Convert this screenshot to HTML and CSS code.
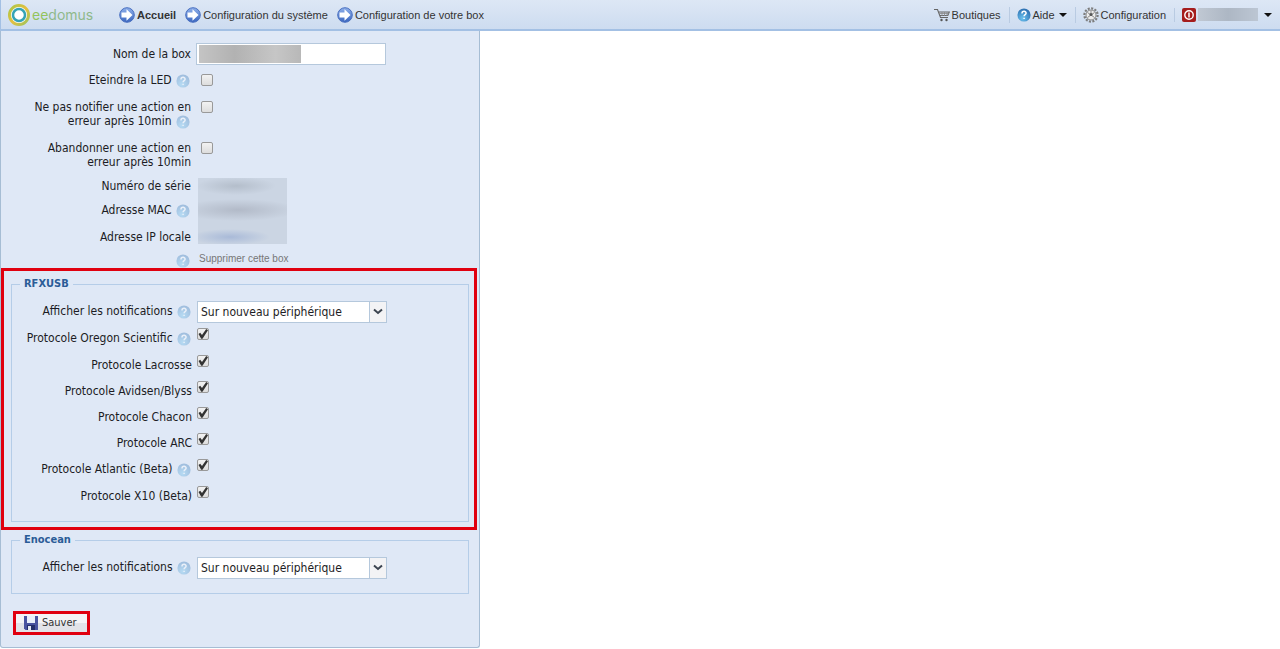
FILE: index.html
```html
<!DOCTYPE html>
<html lang="fr">
<head>
<meta charset="utf-8">
<title>eedomus - Configuration de votre box</title>
<link rel="stylesheet" href="styles.css">
</head>
<body>
<svg class="defs" aria-hidden="true">
  <defs>
    <linearGradient id="blue" x1="0" y1="0" x2="0" y2="1"><stop offset="0" stop-color="#8fb0ea"/><stop offset="1" stop-color="#3a66bf"/></linearGradient>
    <radialGradient id="ball" cx=".4" cy=".75" r=".7"><stop offset="0" stop-color="#6cc3ef"/><stop offset="1" stop-color="#2f73b4"/></radialGradient>
    <linearGradient id="ring" x1="0" y1="0" x2="1" y2="1"><stop offset="0" stop-color="#a9c748"/><stop offset=".5" stop-color="#e5c040"/><stop offset="1" stop-color="#9cc45c"/></linearGradient>
    <symbol id="arrow" viewBox="0 0 16 16"><circle cx="8" cy="8" r="7.300" fill="url(#blue)" stroke="#4a70c0"/><path d="M2.500 5.500h5V2.300L13.500 8l-6 5.700v-3.200h-5z" fill="#fff"/></symbol>
    <symbol id="help" viewBox="0 0 16 16"><circle cx="8" cy="8" r="7.500" fill="url(#ball)"/><path d="M5.700 6.200c0-3.200 4.900-3.100 4.700-.2-.1 1.500-2.300 1.600-2.300 3.300M8.100 11v1.700" fill="none" stroke="#fff" stroke-width="1.700"/></symbol>
  </defs>
</svg>
<header class="toolbar">
  <a class="logo" href="#">
    <svg width="24" height="24" viewBox="0 0 24 24" aria-hidden="true"><circle cx="12" cy="12" r="9.500" fill="#fff" stroke="url(#ring)" stroke-width="3"/><circle cx="12" cy="12" r="6" fill="#fff" stroke="#35a3b5" stroke-width="2.500"/></svg>
    <span>ee<span class="logo-rest">domus</span></span>
  </a>
  <nav class="crumbs">
    <a class="item home" href="#"><svg class="icon"><use href="#arrow"/></svg>Accueil</a>
    <a class="item" href="#"><svg class="icon"><use href="#arrow"/></svg>Configuration du système</a>
    <a class="item" href="#"><svg class="icon"><use href="#arrow"/></svg>Configuration de votre box</a>
  </nav>
  <nav class="tools">
    <a class="item" href="#"><svg class="icon" viewBox="0 0 16 16"><path d="M0 2.500h3.500l3 8H14M4.500 5h10.800l-1.500 3.500H6" fill="none" stroke="#666" stroke-width="1.100"/><path d="M5 6.500h9.800M8 5v4M10.500 5v4M13 5v4" stroke="#888" stroke-width=".8"/><circle cx="7.500" cy="13" r="1.200" fill="#555"/><circle cx="12.500" cy="13" r="1.200" fill="#555"/></svg>Boutiques</a>
    <button class="item" type="button"><svg class="small-icon"><use href="#help"/></svg>Aide<span class="caret"></span></button>
    <a class="item" href="#"><svg class="icon" viewBox="0 0 16 16"><circle cx="8" cy="8" r="6.600" fill="none" stroke="#7c7c7c" stroke-width="2.200" stroke-dasharray="2.050 1.400"/><circle cx="8" cy="8" r="5" fill="#ececec" stroke="#8a8a8a"/><path d="M8 8V3.500M8 8l3.500 2.500M8 8l-3.500 2.500M8 8l3.500-2.500M8 8L4.500 5.500" stroke="#8a8a8a" fill="none"/><circle cx="8" cy="7.500" r="1.500" fill="#555"/></svg>Configuration</a>
    <button class="item" type="button" aria-label="Compte"><svg class="small-icon" viewBox="0 0 14 14"><rect width="14" height="14" rx="2" fill="#a51d1d"/><circle cx="7" cy="7" r="4.200" fill="none" stroke="#fff" stroke-width="1.400"/><path d="M7 4.500v5" stroke="#fff" stroke-width="1.500"/></svg><span class="user"></span><span class="caret"></span></button>
  </nav>
</header>

<main class="panel">
  <form>
    <div class="general">
      <div class="row"><label class="label" for="nom">Nom de la box</label><div class="name-field"><input id="nom" type="text"><span class="name-mask"></span></div></div>
      <div class="row help-row"><label class="label" for="led">Eteindre la LED <svg class="help"><use href="#help"/></svg></label><input id="led" type="checkbox"></div>
      <div class="row two-lines"><label class="label" for="notif">Ne pas notifier une action en<br>erreur après 10min <svg class="help"><use href="#help"/></svg></label><input id="notif" type="checkbox"></div>
      <div class="row last-check"><label class="label" for="abandon">Abandonner une action en<br>erreur après 10min</label><input id="abandon" type="checkbox"></div>
      <div class="row">
        <div class="identity">
          <div class="label serial">Numéro de série</div>
          <div class="label mac">Adresse MAC <svg class="help"><use href="#help"/></svg></div>
          <div class="label ip">Adresse IP locale</div>
        </div>
        <div class="masked"></div>
      </div>
      <div class="row remove"><span class="label"><svg class="help"><use href="#help"/></svg></span><a class="remove-link" href="#">Supprimer cette box</a></div>
    </div>

    <div class="highlight">
      <fieldset>
        <legend>RFXUSB</legend>
        <div class="row help-row"><label class="label" for="rfx">Afficher les notifications <svg class="help"><use href="#help"/></svg></label><div class="combo"><select id="rfx"><option>Sur nouveau périphérique</option></select><svg class="chevron" viewBox="0 0 10 7"><path d="M1 1.500l4 3.500 4-3.500"/></svg></div></div>
        <div class="row help-row"><label class="label" for="p1">Protocole Oregon Scientific <svg class="help"><use href="#help"/></svg></label><input id="p1" type="checkbox" checked></div>
        <div class="row"><label class="label" for="p2">Protocole Lacrosse</label><input id="p2" type="checkbox" checked></div>
        <div class="row"><label class="label" for="p3">Protocole Avidsen/Blyss</label><input id="p3" type="checkbox" checked></div>
        <div class="row"><label class="label" for="p4">Protocole Chacon</label><input id="p4" type="checkbox" checked></div>
        <div class="row"><label class="label" for="p5">Protocole ARC</label><input id="p5" type="checkbox" checked></div>
        <div class="row help-row"><label class="label" for="p6">Protocole Atlantic (Beta) <svg class="help"><use href="#help"/></svg></label><input id="p6" type="checkbox" checked></div>
        <div class="row"><label class="label" for="p7">Protocole X10 (Beta)</label><input id="p7" type="checkbox" checked></div>
      </fieldset>
    </div>

    <div class="enocean">
      <fieldset>
        <legend>Enocean</legend>
        <div class="row help-row"><label class="label" for="eno">Afficher les notifications <svg class="help"><use href="#help"/></svg></label><div class="combo"><select id="eno"><option>Sur nouveau périphérique</option></select><svg class="chevron" viewBox="0 0 10 7"><path d="M1 1.500l4 3.500 4-3.500"/></svg></div></div>
      </fieldset>
    </div>

    <button class="save" type="submit"><svg width="14" height="14" viewBox="0 0 14 14" aria-hidden="true"><path d="M0 0h14v14H1.500L0 12.500z" fill="#4a54a0"/><path d="M3 0h8v7H3z" fill="#e9effa"/><path d="M3 9h8v5H3z" fill="#252f6b"/><path d="M4 10h3v4H4z" fill="#e4e8f2"/></svg>Sauver</button>
  </form>
</main>
</body>
</html>
```
FILE: styles.css
```css
* { box-sizing: border-box; }

body {
  margin: 0;
  background: #fff;
  color: #1c1c24;
  font: 12px/14px "DejaVu Sans Condensed", "DejaVu Sans", Tahoma, sans-serif;
}

.defs { position: absolute; width: 0; height: 0; }

/* Toolbar */
.toolbar {
  display: flex;
  align-items: center;
  height: 31px;
  padding: 0 8px 0 6px;
  border-bottom: 2px solid #a3c0e4;
  border-left: 1px solid #a3c0e4;
  background: linear-gradient(#dde7f5, #cddcf0);
  font: 11px/16px "Liberation Sans", Arial, sans-serif;
}

.logo {
  display: flex;
  align-items: center;
  gap: 1px;
  width: 112px;
  color: #93c35c;
  font: 14px/24px Inter, sans-serif;
  text-decoration: none;
}
.logo-rest { color: #8fb98b; }

.crumbs, .tools { display: flex; align-items: center; }
.crumbs { gap: 9px; }
.tools { margin-left: auto; }

.item {
  display: flex;
  align-items: center;
  gap: 2px;
  padding: 0;
  border: 0;
  background: none;
  color: #333;
  font: inherit;
  text-decoration: none;
  white-space: nowrap;
}
.home { font-weight: bold; }
.icon { width: 16px; height: 16px; }
.small-icon { width: 14px; height: 14px; }
.tools .item + .item {
  margin-left: 8px;
  padding-left: 7px;
  border-left: 1px solid #b9cbe2;
}
.caret {
  margin-left: 2px;
  border: 4px solid transparent;
  border-top-color: #111;
  border-bottom: 0;
}
.user { width: 60px; height: 13px; background: linear-gradient(90deg, #c0c8d3, #adb7c4 50%, #bcc6d3); }
.user + .caret { margin-left: 4px; }

/* Panel */
.panel {
  max-width: 480px;
  padding: 12px 2px 12px 0;
  border: 1px solid #a6bdd4;
  border-top: 0;
  border-radius: 0 0 3px 3px;
  background: #dfe8f6;
}

.row {
  display: grid;
  grid-template-columns: 180px 1fr;
  column-gap: 5px;
  align-items: start;
  min-height: 26px;
}
.help-row { min-height: 27px; }
.label { padding-top: 3px; text-align: right; white-space: nowrap; }
.help {
  width: 14px;
  height: 14px;
  margin-left: 1px;
  margin-right: 1px;
  vertical-align: -4px;
  margin-top: -4px;
  opacity: .35;
}

.general .row { grid-template-columns: 190px 1fr; }
.general .label { padding-top: 4px; }
.general input[type="checkbox"] { margin: 5px 0 0 5px; }
.two-lines { min-height: 41px; }
.last-check { min-height: 38px; }

.name-field { position: relative; width: 190px; }
.name-field input {
  display: block;
  width: 100%;
  height: 22px;
  border: 1px solid #b5c8dc;
  background: #fff;
}
.name-mask {
  position: absolute;
  inset: 2px auto 2px 3px;
  width: 102px;
  background: linear-gradient(90deg, #c4c4c4, #b2b2b2 35%, #c6c6c6 75%, #b8b8b8);
}

.identity { display: grid; }
.serial { height: 24px; }
.mac { height: 27px; }
.ip { height: 23px; }
.masked {
  width: 89px;
  height: 66px;
  margin: 3px 0 0 2px;
  background:
    radial-gradient(ellipse 40px 8px at 32px 59px, #a9bad8, transparent),
    radial-gradient(ellipse 60px 11px at 40px 32px, #b2bac8, transparent),
    radial-gradient(ellipse 40px 9px at 38px 8px, #b4becb, transparent),
    #cbd5e3;
}
.general .remove { min-height: 19px; }
.remove-link {
  padding: 3px 0 0 3px;
  color: #777;
  font: 10px/14px "Liberation Sans", Arial, sans-serif;
  text-decoration: none;
}

input[type="checkbox"] {
  appearance: none;
  width: 12px;
  height: 12px;
  margin: 0;
  border: 1px solid #999;
  border-radius: 2px;
  background: linear-gradient(#f2f2f2, #ddd);
}
input[type="checkbox"]:checked::before {
  content: "";
  display: block;
  height: 10px;
  background: #333;
  clip-path: polygon(5% 50%, 22% 38%, 40% 60%, 82% 0, 100% 12%, 45% 98%, 32% 98%);
}

.highlight {
  padding: 6px 5px 5px 7px;
  border: 3px solid #e0000f;
}
fieldset {
  min-width: 0;
  margin: 0;
  padding: 10px 0 9px;
  border: 1px solid #b5cde8;
}
legend {
  margin-left: 8px;
  padding: 0 4px;
  color: #2b5c97;
  font-size: 11px;
  font-weight: bold;
}
.enocean { padding: 3px 8px 0 10px; }

.combo { position: relative; width: 190px; }
.combo select {
  appearance: none;
  display: block;
  width: 100%;
  height: 22px;
  padding: 0 20px 0 3px;
  border: 1px solid #b5c8dc;
  border-radius: 0;
  background: linear-gradient(90deg, #b5c8dc 1px, #f3f3f5 1px) right / 17px 100% no-repeat #fff;
  color: inherit;
  font: inherit;
}
.chevron {
  position: absolute;
  top: 7px;
  right: 4px;
  width: 10px;
  height: 7px;
  fill: none;
  stroke: #3c4450;
  stroke-width: 2;
  pointer-events: none;
}

.save {
  display: flex;
  align-items: center;
  gap: 4px;
  height: 24px;
  margin: 17px 0 0 12px;
  padding: 0 10px 0 8px;
  border: 3px solid #e0000f;
  background: linear-gradient(#f4f4f6 50%, #e2e3e8 50%);
  color: #333;
  font: 11px/14px "DejaVu Sans Condensed", "DejaVu Sans", sans-serif;
}
```
